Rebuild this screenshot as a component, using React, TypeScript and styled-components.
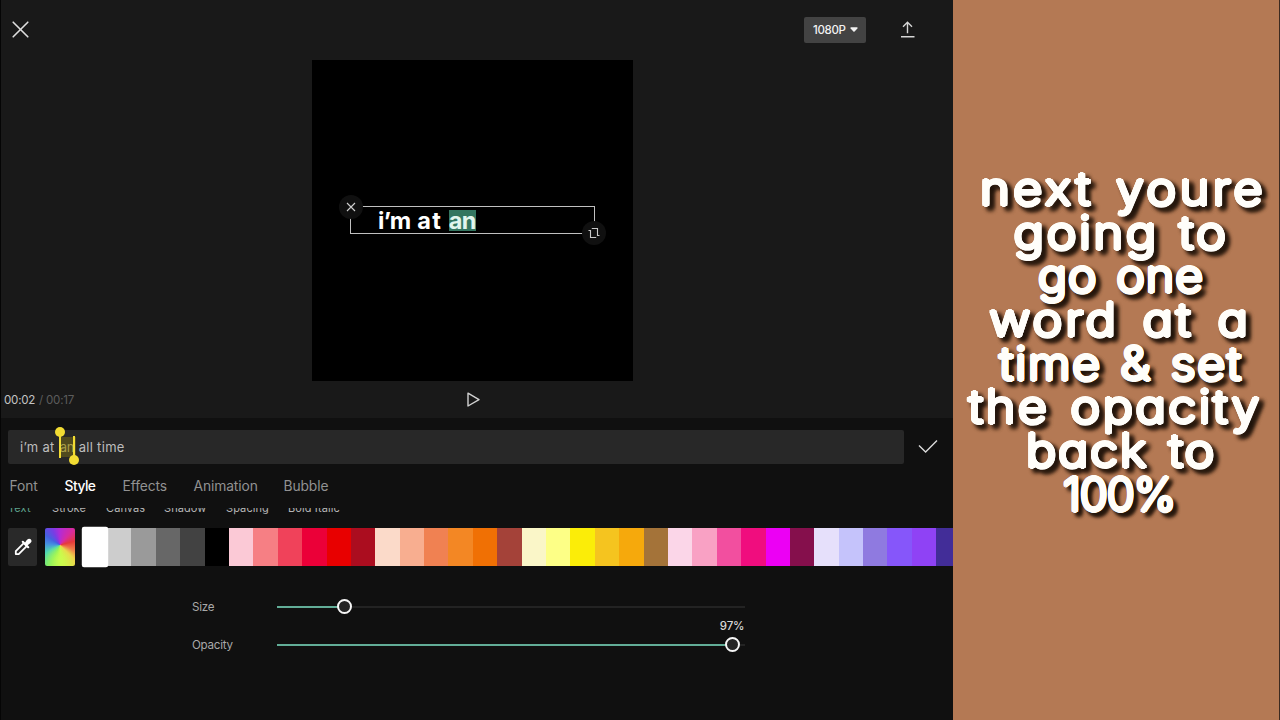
import React from "react";
import styled, { createGlobalStyle } from "styled-components";

const Global = createGlobalStyle`
  * { box-sizing: border-box; }
  html, body { margin: 0; padding: 0; background: #101010; }
  body { font-family: Inter, "Liberation Sans", sans-serif; overflow: hidden; }
`;

const Frame = styled.div`
  display: flex;
  width: 1280px;
  height: 720px;
  overflow: hidden;
`;

const Editor = styled.main`
  display: flex;
  flex-direction: column;
  width: 953px;
  height: 720px;
  flex: none;
  background: #101010;
  border-left: 1px solid #050505;
  overflow: hidden;
`;

const Preview = styled.section`
  display: flex;
  flex-direction: column;
  height: 418px;
  flex: none;
  background: #191919;
`;

const TopBar = styled.header`
  display: flex;
  align-items: center;
  height: 60px;
  padding: 0 37px 1px 11px;
`;

const Resolution = styled.button`
  display: flex;
  align-items: center;
  gap: 4px;
  width: 62px;
  height: 26px;
  margin: 0 34px 0 auto;
  padding: 0 0 0 9px;
  border: 0;
  border-radius: 2px;
  background: #434343;
  color: #f2f2f2;
  font: 500 11.5px Inter, sans-serif;
  letter-spacing: -0.35px;
`;

const Stage = styled.div`
  display: flex;
  width: 321px;
  height: 321px;
  margin-left: 311px;
  padding: 146px 0 0 38px;
  background: #000;
`;

const TextBox = styled.div`
  position: relative;
  width: 245px;
  height: 28px;
  padding-left: 27px;
  border: 1.5px solid #c0c0c0;
  color: #fff;
  font-weight: 700;
  font-size: 23.5px;
  line-height: 27px;
  letter-spacing: -0.6px;
  word-spacing: 1.5px;
  white-space: nowrap;
`;

const Wide = styled.span`
  letter-spacing: 1.4px;
`;

const Marked = styled.span`
  display: inline-block;
  height: 21px;
  margin-top: 3px;
  line-height: 21px;
  vertical-align: top;
  background: #347660;
  color: #e2f5ee;
`;

const Handle = styled.span<{ $corner: "start" | "end" }>`
  position: absolute;
  display: flex;
  align-items: center;
  justify-content: center;
  width: 24px;
  height: 24px;
  border-radius: 50%;
  background: #101010;
  ${(p) => (p.$corner === "start" ? "left: -12.5px; top: -12.5px;" : "right: -12px; bottom: -12px;")}
`;

const Playback = styled.div`
  display: flex;
  align-items: center;
  height: 37px;
  padding-left: 3px;
  font-size: 11.6px;
  letter-spacing: -0.25px;
  color: #5c5c5c;
`;

const Elapsed = styled.span`
  color: #c4c4c4;
  margin-right: 4px;
`;

const Clock = styled.div`
  width: 462px;
  white-space: nowrap;
`;

const InputRow = styled.div`
  display: flex;
  align-items: center;
  gap: 14px;
  padding: 12px 0 0 7px;
  height: 46px;
  flex: none;
`;

const Field = styled.div`
  display: flex;
  align-items: center;
  width: 896px;
  height: 34px;
  padding-left: 12px;
  border-radius: 2px;
  background: #282828;
  color: #bdbdbd;
  font-size: 13px;
  letter-spacing: 0.3px;
  white-space: pre;
`;

const Selection = styled.span`
  position: relative;
  width: 16px;
  height: 20px;
  line-height: 20px;
  margin: 0 3px 0 5px;
  background: #504a1e;
  color: #a99e48;
  letter-spacing: -0.3px;
`;

const Grip = styled.span<{ $side: "left" | "right" }>`
  position: absolute;
  top: -1px;
  width: 2px;
  height: 22px;
  background: #f2dc33;
  ${(p) => (p.$side === "left" ? "left: -1px;" : "right: 1px;")}
  &::after {
    content: "";
    position: absolute;
    left: -4px;
    ${(p) => (p.$side === "left" ? "top: -9px;" : "bottom: -7px;")}
    width: 10px;
    height: 10px;
    border-radius: 50%;
    background: #f2dc33;
  }
`;

const Tabs = styled.nav`
  display: flex;
  gap: 27px;
  height: 44px;
  flex: none;
  padding: 0 0 0 8.5px;
  line-height: 44px;
  font-size: 13.8px;
`;

const Tab = styled.span<{ $width: number; $active?: boolean }>`
  width: ${(p) => p.$width}px;
  white-space: nowrap;
  letter-spacing: -0.1px;
  color: ${(p) => (p.$active ? "#fff" : "#929292")};
  font-weight: ${(p) => (p.$active ? 500 : 400)};
  ${(p) => p.$active && "letter-spacing: -0.5px;"}
`;

const SubTabs = styled.nav`
  display: flex;
  align-items: flex-end;
  height: 7px;
  margin-bottom: 13px;
  flex: none;
  padding-left: 7px;
  overflow: hidden;
  line-height: 14px;
  font-size: 11px;
  letter-spacing: 0.1px;
`;

const SubTab = styled.span<{ $width: number; $active?: boolean }>`
  width: ${(p) => p.$width}px;
  flex: none;
  white-space: nowrap;
  color: ${(p) => (p.$active ? "#5fa38d" : "#b5b5b5")};
`;

const Palette = styled.div`
  display: flex;
  width: 952px;
  height: 38px;
  flex: none;
  padding-left: 7px;
  overflow: visible;
`;

const Dropper = styled.button`
  display: flex;
  align-items: center;
  justify-content: center;
  flex: none;
  width: 29px;
  height: 38px;
  margin-right: 8px;
  padding: 0;
  border: 0;
  border-radius: 2px;
  background: #292929;
`;

const Spectrum = styled.div`
  flex: none;
  width: 30px;
  height: 38px;
  margin-right: 7.6px;
  border-radius: 2px;
  background:
    radial-gradient(circle at 50% 85%, rgba(205, 255, 80, 0.75), transparent 45%),
    conic-gradient(from 0deg at 50% 45%, #b32bd6 0deg, #d82ba0 40deg, #e63a3a 75deg, #f0804a 110deg,
      #f0d04a 135deg, #c8f848 175deg, #82f05c 205deg, #4fd8b0 240deg, #4590e0 275deg, #4560e0 305deg, #7a3ce4 335deg, #b32bd6 360deg);
`;

const Swatch = styled.span<{ $color: string; $selected?: boolean }>`
  position: relative;
  flex: none;
  width: 24.4px;
  height: 38px;
  background: ${(p) => p.$color};
  ${(p) => p.$selected && "box-shadow: 0 0 0 1.2px #fff; border-radius: 1px; z-index: 1;"}
`;

const SwatchStrip = styled.div`
  display: flex;
  width: 870px;
  height: 38px;
`;

const Sliders = styled.div`
  display: flex;
  flex-direction: column;
  padding: 22px 0 0 191px;
`;

const SliderRow = styled.label`
  display: flex;
  align-items: center;
  height: 38px;
  color: #a9a9a9;
  font-size: 11.6px;
  letter-spacing: -0.25px;
`;

const SliderName = styled.span`
  width: 85px;
`;

const Track = styled.span`
  position: relative;
  width: 468px;
  height: 2px;
  background: #232323;
`;

const Fill = styled.span<{ $to: number }>`
  display: block;
  width: ${(p) => p.$to}px;
  height: 2px;
  background: #62ad97;
`;

const Knob = styled.span<{ $at: number }>`
  position: absolute;
  top: -7px;
  left: ${(p) => p.$at - 7.5}px;
  width: 15px;
  height: 15px;
  border: 2px solid #f6f6f6;
  border-radius: 50%;
  background: #252525;
`;

const Bubble = styled.span<{ $at: number }>`
  position: absolute;
  top: -25px;
  left: ${(p) => p.$at - 20}px;
  width: 40px;
  text-align: center;
  line-height: 14px;
  color: #d8d8d8;
  font-size: 11.5px;
  font-weight: 500;
`;

const Caption = styled.aside`
  display: flex;
  flex-direction: column;
  width: 327px;
  height: 720px;
  flex: none;
  padding-top: 167px;
  background: #b47954;
  border-right: 1px solid #3c2a20;
`;

const ring = (radius: number, dx: number, dy: number, blur: number, color: string, steps: number) =>
  Array.from({ length: steps }, (_, i) => {
    const a = (i * 2 * Math.PI) / steps;
    return `${(Math.cos(a) * radius + dx).toFixed(2)}px ${(Math.sin(a) * radius + dy).toFixed(2)}px ${blur}px ${color}`;
  }).join(", ");

const captionShadow = [
  ring(1.6, 0, 0, 0, "#fffefa", 16),
  ring(1.6, 4, 4, 4, "rgba(30, 18, 10, 0.6)", 8),
].join(", ");

const CaptionLine = styled.div<{ $center: number; $ls: number; $ws: number; $stretch: number }>`
  width: 400px;
  height: 43.7px;
  flex: none;
  margin-left: ${(p) => p.$center - 200 + p.$ls / 2}px;
  line-height: 43.7px;
  text-align: center;
  white-space: nowrap;
  color: #fffefa;
  font-size: 46px;
  font-weight: 300;
  font-feature-settings: "cv11" 1;
  letter-spacing: ${(p) => p.$ls}px;
  word-spacing: ${(p) => p.$ws}px;
  text-shadow: ${captionShadow};
  transform: scaleX(${(p) => p.$stretch});
`;

const tabs: [string, number][] = [
  ["Font", 28], ["Style", 31], ["Effects", 44], ["Animation", 63], ["Bubble", 43],
];

const subTabs: [string, number][] = [
  ["Text", 44], ["Stroke", 54], ["Canvas", 58], ["Shadow", 62], ["Spacing", 62], ["Bold Italic", 60],
];

const colors = [
  "#ffffff", "#cdcdcd", "#9a9a9a", "#676767", "#424242", "#000000",
  "#fbc9d6", "#f67f84", "#f0425a", "#eb0038", "#e80000", "#ab0d1f",
  "#fbdac9", "#f8ae90", "#f08152", "#f38724", "#f07004", "#a44239",
  "#faf6c8", "#fdff86", "#fbed08", "#f5c41f", "#f6a90c", "#a47339",
  "#fbd6e8", "#f9a1c4", "#f24f9f", "#f00d7e", "#ec00f4", "#850f4c",
  "#e6e0fb", "#c5c3fb", "#8f7ae0", "#8656fa", "#8f42f5", "#422d98",
];

const lines: [string, number, number, number, number][] = [
  ["next youre", 168, 3, 4, 1.1],
  ["going to", 167, 2.3, 3, 1.1],
  ["go one", 168, 0.9, 4, 1.05],
  ["word at a", 166, 2.6, 6, 1.1],
  ["time & set", 167.5, 1.4, 3, 1.06],
  ["the opacity", 160.5, 2.1, 4, 1.1],
  ["back to", 167, 1.4, 4, 1.1],
  ["100%", 167, -1.2, 0, 0.99],
];

export default function App() {
  return (
    <Frame>
      <Global />
      <Editor>
        <Preview>
          <TopBar>
            <svg width="17" height="17" viewBox="0 0 17 17" stroke="#dedede" strokeWidth="1.6" strokeLinecap="round">
              <path d="M1.2 1.2 15.8 15.8M15.8 1.2 1.2 15.8" />
            </svg>
            <Resolution>
              1080P
              <svg width="8" height="5" viewBox="0 0 8 5" fill="#f2f2f2">
                <path d="M1 .3h6q1 .4.4 1.2L4.6 4.6q-.6.5-1.2 0L.6 1.5Q0 .7 1 .3Z" />
              </svg>
            </Resolution>
            <svg width="16" height="18" viewBox="0 0 16 18" fill="none" stroke="#d6d6d6" strokeWidth="1.4">
              <path d="M7.5 12.2V1.4M3 5.7 7.5 1.2l4.5 4.5M1 15.8h13.5" />
            </svg>
          </TopBar>
          <Stage>
            <TextBox>
              i’m <Wide>at</Wide> <Marked>an</Marked>
              <Handle $corner="start">
                <svg width="10" height="10" viewBox="0 0 10 10" stroke="#d0d0d0" strokeWidth="1.1">
                  <path d="M1 1l8 8M9 1 1 9" />
                </svg>
              </Handle>
              <Handle $corner="end">
                <svg width="12" height="12" viewBox="0 0 12 12" fill="none" stroke="#c8c8c8" strokeWidth="1.1">
                  <path d="M.5 3.5H2.5V10.5H8.2M3.8 1.5H9.5V8.5H11.5" />
                </svg>
              </Handle>
            </TextBox>
          </Stage>
          <Playback>
            <Clock><Elapsed>00:02</Elapsed>/ 00:17</Clock>
            <svg width="15" height="16" viewBox="0 0 15 16" fill="none" stroke="#d2d2d2" strokeWidth="1.4" strokeLinejoin="round">
              <path d="M2 1.2v12.8L13 7.6Z" />
            </svg>
          </Playback>
        </Preview>
        <InputRow>
          <Field>
            i’m at
            <Selection>an<Grip $side="left" /><Grip $side="right" /></Selection>
            all time
          </Field>
          <svg width="20" height="14" viewBox="0 0 20 14" fill="none" stroke="#dadada" strokeWidth="1.4">
            <path d="M1 5.6 7.6 12 19 .6" />
          </svg>
        </InputRow>
        <Tabs>
          {tabs.map(([name, width]) => (
            <Tab key={name} $width={width} $active={name === "Style"}>{name}</Tab>
          ))}
        </Tabs>
        <SubTabs>
          {subTabs.map(([name, width]) => (
            <SubTab key={name} $width={width} $active={name === "Text"}>{name}</SubTab>
          ))}
        </SubTabs>
        <Palette>
          <Dropper>
            <svg width="20" height="20" viewBox="0 0 20 20" fill="none" stroke="#fff" strokeWidth="1.8" strokeLinejoin="round">
              <path d="M10.8 6.2 2.8 14.2v2.9h2.9l8-8" />
              <path d="M9.8 4.8l5.4 5.4" strokeWidth="2.2" strokeLinecap="round" />
              <path d="M12 7.2 14.5 3.6Q16 2 17.2 3 18.2 4.2 16.6 5.6L13.2 8.2Z" fill="#fff" />
            </svg>
          </Dropper>
          <Spectrum />
          <SwatchStrip>
            {colors.map((c) => (
              <Swatch key={c} $color={c} $selected={c === "#ffffff"} />
            ))}
          </SwatchStrip>
        </Palette>
        <Sliders>
          <SliderRow>
            <SliderName>Size</SliderName>
            <Track><Fill $to={67} /><Knob $at={67.5} /></Track>
          </SliderRow>
          <SliderRow>
            <SliderName>Opacity</SliderName>
            <Track><Fill $to={455} /><Knob $at={455.5} /><Bubble $at={455}>97%</Bubble></Track>
          </SliderRow>
        </Sliders>
      </Editor>
      <Caption>
        {lines.map(([text, center, ls, ws, stretch]) => (
          <CaptionLine key={text} $center={center} $ls={ls} $ws={ws} $stretch={stretch}>{text}</CaptionLine>
        ))}
      </Caption>
    </Frame>
  );
}
